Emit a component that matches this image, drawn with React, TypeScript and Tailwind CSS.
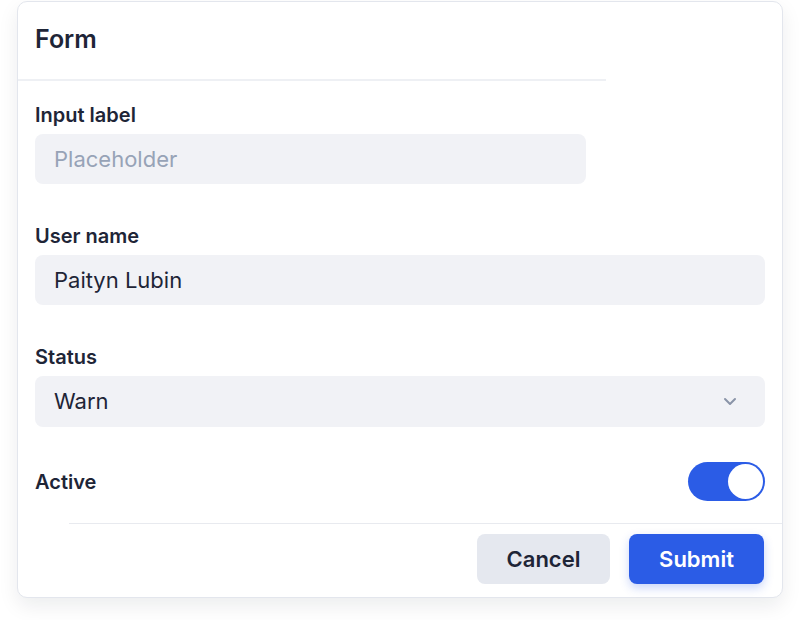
import React from "react";

export default function App() {
  return (
    <div className="w-[800px] h-[620px] bg-white" style={{ fontFamily: "Inter, 'Noto Sans', sans-serif" }}>
      <div className="pl-[17px] pt-[1px] w-[783px]">
        <div className="w-[766px] h-[597px] rounded-[10px] border border-[#e3e6ed] bg-white shadow-[0_8px_20px_rgba(15,23,42,0.08)] flex flex-col text-[#1e2537]">
          <div className="h-[77px] flex items-center px-[17px] pb-[2px]">
            <h1 className="text-[25px] font-semibold leading-none">Form</h1>
          </div>
          <div className="h-[2px] w-[588px] bg-[#eef0f4]" />
          <div className="px-[17px] pt-[22px] flex flex-col">
            <label className="text-[20px] font-semibold leading-[24px]">Input label</label>
            <div className="mt-[7px] h-[50px] w-[551px] rounded-[8px] bg-[#f1f2f6] flex items-center px-[19px] text-[22px] text-[#97a3b7]">
              Placeholder
            </div>
            <label className="mt-[40px] text-[20px] font-semibold leading-[24px]">User name</label>
            <div className="mt-[7px] h-[50px] w-full rounded-[8px] bg-[#f1f2f6] flex items-center px-[19px] text-[22px] text-[#1e2537]">
              Paityn Lubin
            </div>
            <label className="mt-[40px] text-[20px] font-semibold leading-[24px]">Status</label>
            <div className="mt-[7px] h-[51px] w-full rounded-[8px] bg-[#f1f2f6] flex items-center justify-between pl-[19px] pr-[28px] text-[22px] text-[#1e2537]">
              <span>Warn</span>
              <svg width="14" height="9" viewBox="0 0 14 9" fill="none">
                <path d="M2 2l5 5 5-5" stroke="#8a94a8" strokeWidth="2" strokeLinecap="round" strokeLinejoin="round" />
              </svg>
            </div>
            <div className="mt-[35px] h-[39px] flex items-center justify-between">
              <span className="text-[20px] font-semibold">Active</span>
              <div className="w-[77px] h-[39px] rounded-full bg-[#2b5ce6] flex items-center justify-end p-[2px]">
                <div className="w-[35px] h-[35px] rounded-full bg-white" />
              </div>
            </div>
          </div>
          <div className="mt-[22px] ml-[51px] h-[1px] bg-[#e8eaef]" />
          <div className="flex justify-end gap-[19px] pl-[17px] pr-[18px] pt-[10px]">
            <button className="w-[133px] h-[50px] rounded-[8px] bg-[#e5e8ef] text-[22px] font-semibold text-[#1e2537]">Cancel</button>
            <button className="w-[135px] h-[50px] rounded-[8px] bg-[#2b5ce6] text-[22px] font-semibold text-white shadow-[0_4px_10px_rgba(43,92,230,0.25)]">Submit</button>
          </div>
        </div>
      </div>
    </div>
  );
}
